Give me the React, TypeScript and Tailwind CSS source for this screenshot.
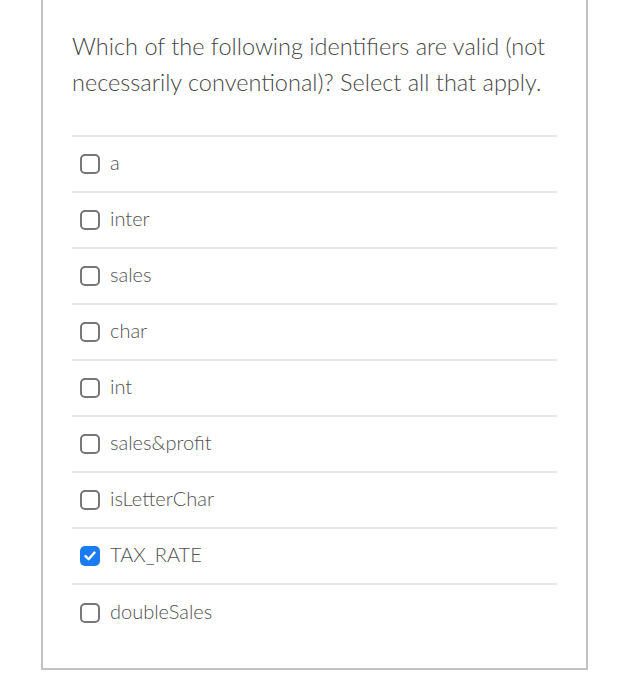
import React from "react";

const options = [
  { label: "a", checked: false },
  { label: "inter", checked: false },
  { label: "sales", checked: false },
  { label: "char", checked: false },
  { label: "int", checked: false },
  { label: "sales&profit", checked: false },
  { label: "isLetterChar", checked: false },
  { label: "TAX_RATE", checked: true },
  { label: "doubleSales", checked: false },
];

function Box({ checked }: { checked: boolean }) {
  if (checked) {
    return (
      <span className="flex h-[20px] w-[20px] shrink-0 items-center justify-center rounded-[5px] bg-[#1a7cf0]">
        <svg width="14" height="14" viewBox="0 0 14 14" fill="none">
          <path d="M2.5 7.2 L5.6 10.2 L11.5 3.6" stroke="white" strokeWidth="2.4" strokeLinecap="round" strokeLinejoin="round" />
        </svg>
      </span>
    );
  }
  return <span className="block h-[20px] w-[20px] shrink-0 rounded-[5px] border-2 border-[#777777] bg-white" />;
}

export default function App() {
  return (
    <div className="min-h-[700px] bg-white" style={{ fontFamily: "Lato, 'Liberation Sans', sans-serif" }}>
      <div className="ml-[41px] mt-[-10px] w-[547px] border-2 border-[#c2c2c2] bg-white px-[29px] pb-[27px] pt-[36px]">
        <p className="text-[23.5px] font-light leading-[36px] text-[#474747]">
          Which of the following identifiers are valid (not necessarily conventional)? Select all that apply.
        </p>
        <div className="mt-[35px] border-t-2 border-[#e6e6e6]">
          {options.map((o) => (
            <div key={o.label} className="flex h-[56px] items-center gap-[10px] border-b-2 border-[#e6e6e6] pl-[8px] last:border-b-0">
              <Box checked={o.checked} />
              <span className="-mt-[5px] text-[20px] font-light text-[#525252]">{o.label}</span>
            </div>
          ))}
        </div>
      </div>
    </div>
  );
}
